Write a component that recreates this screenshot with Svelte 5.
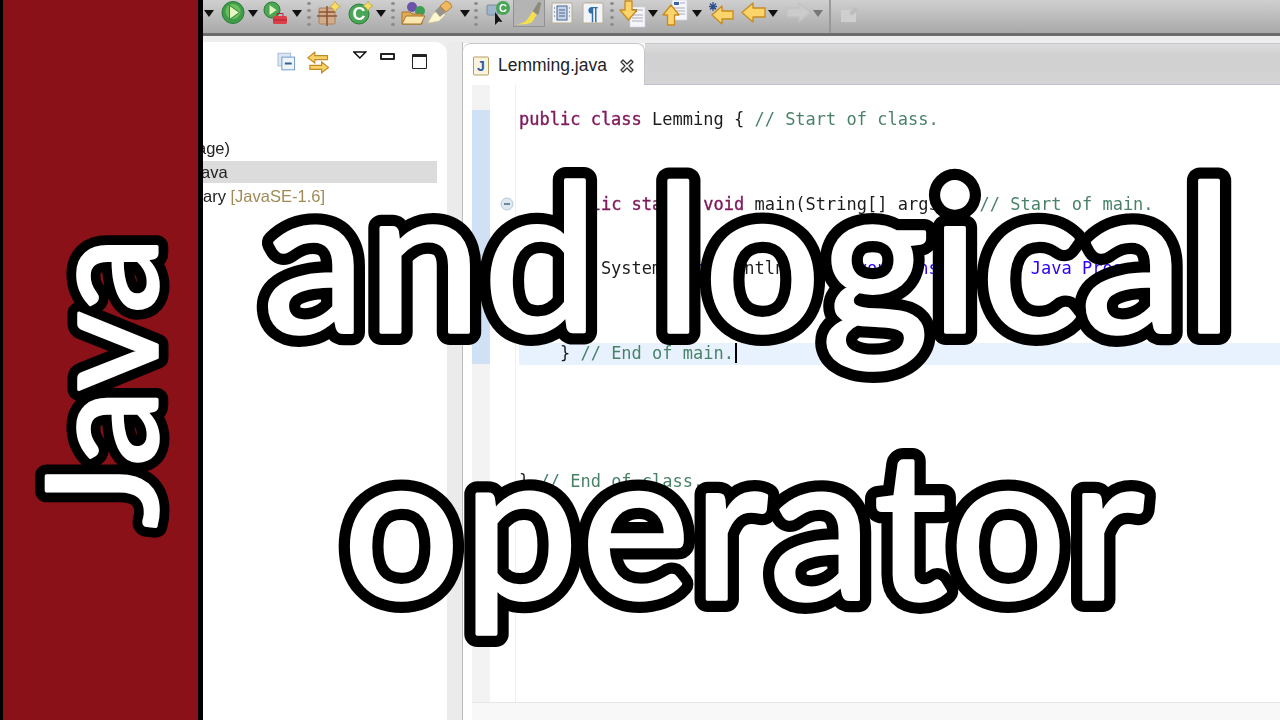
<script>
  // kind, centre x on the page (the toolbar starts at x=203)
  const tools = [
    ['caret', 209], ['run', 233], ['caret', 253], ['ext', 275], ['caret', 297], ['dots', 309],
    ['pkg', 328], ['cls', 360], ['caret', 381], ['dots', 393], ['folder', 413], ['pencil', 440],
    ['caret', 465], ['dots', 476], ['hier', 498], ['mark', 529], ['block', 562], ['para', 593],
    ['dots', 612], ['down', 632], ['caret', 653], ['up', 675], ['caret', 697], ['star', 722],
    ['back', 754], ['caret', 773], ['fwd', 798], ['caretoff', 818], ['line', 830], ['pin', 849]
  ];
  const widths = { caret: 10, caretoff: 10, dots: 4, line: 2, mark: 32 };

  let right = 203;
  const items = tools.map(([kind, x]) => {
    const w = widths[kind] ?? 26;
    const gap = x - w / 2 - right;
    right = x + w / 2;
    return { kind, w, gap };
  });
</script>

{#snippet arrow(d, fill = '#fbd56b', edge = '#c98a1e')}
  <path {d} fill={fill} stroke={edge} stroke-width="1.3" stroke-linejoin="round" />
{/snippet}

{#snippet page(x, y)}
  <rect {x} {y} width="15" height="20" fill="#f4f6fa" stroke="#ccd" stroke-width=".6" />
  <rect x={x + 2} y={y + 2} width="5" height="3" fill="#3a62a8" />
  <path d="M{x + 8} {y + 3}h5M{x + 2} {y + 8}h11M{x + 2} {y + 11}h11M{x + 2} {y + 14}h11" stroke="#aab" />
{/snippet}

<div class="page">
  <div class="spine"></div>
  <div class="ide">
    <div class="toolbar">
      {#each items as t}
        <div class="tool {t.kind}" style="width:{t.w}px;margin-left:{t.gap}px">
          {#if t.kind === 'run'}
            <svg viewBox="0 0 26 26">
              <circle cx="13" cy="12.5" r="11" fill="#3f9d48" stroke="#2a7c38" />
              <circle cx="13" cy="11.5" r="7.5" fill="#69bd5d" />
              <path d="M9.5 5.5l10 7-10 7z" fill="#e4f5bf" stroke="#2f8a3a" />
            </svg>
          {:else if t.kind === 'ext'}
            <svg viewBox="0 0 26 26">
              <circle cx="10" cy="10" r="8" fill="#4ca653" stroke="#2a7c38" />
              <path d="M7.5 5l7 5-7 5z" fill="#dff2ba" />
              <rect x="11" y="16" width="14" height="8" rx="1.5" fill="#dc3f49" />
              <path d="M15 16v-2.500h6v2.500M11 20h14" stroke="#a92530" fill="none" />
            </svg>
          {:else if t.kind === 'pkg'}
            <svg viewBox="0 0 26 26">
              <rect x="4" y="8" width="16" height="16" rx="1" fill="#d2ab8a" stroke="#a9805f" />
              <path d="M12 6v20M2 16h20M4 12h16" stroke="#8a5636" stroke-width="1.500" />
              <path d="M20 1l2 3.500 3.500 2-3.500 2-2 3.500-2-3.500-3.500-2 3.500-2z" fill="#f6dd6a" stroke="#b99a2c" stroke-width=".6" />
            </svg>
          {:else if t.kind === 'cls'}
            <svg viewBox="0 0 26 26">
              <circle cx="12" cy="14" r="10" fill="#4aa556" stroke="#2a7c38" />
              <text x="12" y="20" class="badge">C</text>
              <path d="M21 1l1.800 3.200 3.200 1.800-3.200 1.800-1.800 3.200-1.800-3.200-3.200-1.800 3.200-1.800z" fill="#f6dd6a" stroke="#b99a2c" stroke-width=".6" />
            </svg>
          {:else if t.kind === 'folder'}
            <svg viewBox="0 0 26 26">
              <circle cx="12" cy="7" r="5" fill="#6a52a8" />
              <circle cx="20" cy="11" r="5" fill="#3f9d55" />
              <path d="M2 12h8l2 2h10v10H2z" fill="#e0ac55" stroke="#a8742a" />
              <path d="M2 24l4-8h19l-4 8z" fill="#fbe6b0" stroke="#a8742a" />
            </svg>
          {:else if t.kind === 'pencil'}
            <svg viewBox="0 0 26 26">
              <path d="M1 23l5-9 7-5 5 6-6 6z" fill="#fdf6cf" stroke="#d8c98c" stroke-width=".6" />
              <path d="M8 11l5-5 6 6-6 5z" fill="#9a958c" />
              <path d="M13 6l6-5q5 1 6 6l-6 5z" fill="#f0b860" stroke="#b98230" />
            </svg>
          {:else if t.kind === 'hier'}
            <svg viewBox="0 0 26 26">
              <rect x="2" y="5" width="11" height="10" rx="1" fill="#9db4c9" stroke="#7c8fa0" />
              <circle cx="18" cy="8" r="7" fill="#49a556" />
              <text x="18" y="12" class="badge small">C</text>
              <path d="M10 12v13l3.500-3.500 4 .5z" fill="#151515" />
            </svg>
          {:else if t.kind === 'mark'}
            <svg viewBox="0 0 32 28">
              <path d="M3 26q7-1 11-5l6-9 4 4-5 8q-6 3-16 2z" fill="#f4e04a" />
              <path d="M20 12l6-10 3 1-3 13z" fill="#8c8a7a" />
            </svg>
          {:else if t.kind === 'block'}
            <svg viewBox="0 0 26 26">
              <rect x="3" y="3" width="20" height="20" rx="1" fill="#eef2f7" stroke="#b9ad90" />
              <rect x="8" y="6" width="10" height="14" fill="#c7d3e5" stroke="#47658f" />
              <path d="M10 10h6M10 13h6M10 16h6M5 8h1M5 12h1M5 16h1M20 8h1M20 12h1M20 16h1" stroke="#47658f" />
            </svg>
          {:else if t.kind === 'para'}
            <svg viewBox="0 0 26 26">
              <rect x="3" y="3" width="20" height="20" rx="1" fill="#f1f4f8" stroke="#b9ad90" />
              <text x="13" y="20" class="pilcrow">¶</text>
            </svg>
          {:else if t.kind === 'down'}
            <svg viewBox="0 0 26 26">
              {@render page(11, 7)}
              {@render arrow('M6 1h7v9h5l-8.500 10L1 10h5z')}
            </svg>
          {:else if t.kind === 'up'}
            <svg viewBox="0 0 26 26">
              {@render page(10, 0)}
              {@render arrow('M9 5l8 10h-4.500v10h-7V15H1z')}
            </svg>
          {:else if t.kind === 'star'}
            <svg viewBox="0 0 26 26">
              {@render arrow('M13 6v5h11v8H13v5L3 15z')}
              <path d="M4 2v9M0 6.500h8M1 3.500l6 6M7 3.500l-6 6" stroke="#2d4d8c" stroke-width="1.300" />
            </svg>
          {:else if t.kind === 'back'}
            <svg viewBox="0 0 26 26">
              {@render arrow('M12 3v5h12v9H12v5L1 12.500z')}
            </svg>
          {:else if t.kind === 'fwd'}
            <svg viewBox="0 0 26 26">
              {@render arrow('M14 3v5H2v9h12v5l11-9.500z', '#cbcbcb', '#c2c2c2')}
            </svg>
          {:else if t.kind === 'pin'}
            <svg viewBox="0 0 26 26">
              <rect x="5" y="10" width="15" height="12" fill="#cfcfcf" />
              <path d="M13 13l6-6 3 3-6 6z" fill="#bdbdbd" />
            </svg>
          {/if}
        </div>
      {/each}
    </div>

    <div class="main">
      <section class="panel">
        <div class="viewbar">
          <svg class="collapse" width="20" height="20" viewBox="0 0 20 20">
            <rect x="1" y="1" width="13" height="13" fill="#dbe6f2" stroke="#a9bdd3" />
            <rect x="5" y="5" width="13" height="13" fill="#eef4fa" stroke="#6f9bc8" />
            <path d="M8 11.500h7" stroke="#3b5f8c" stroke-width="2" />
          </svg>
          <svg class="link" width="26" height="24" viewBox="0 0 26 24">
            <path d="M9 1L2 6.500 9 12V8.500h13v-4H9z" fill="#f6d26a" stroke="#c48a22" stroke-width="1.200" />
            <path d="M16 11l7 5.500-7 5.500v-3.500H4v-4h12z" fill="#f6d26a" stroke="#c48a22" stroke-width="1.200" />
          </svg>
          <svg class="menu" width="14" height="8" viewBox="0 0 14 8">
            <path d="M1 1h12L7 7z" fill="#fff" stroke="#111" stroke-width="1.500" />
          </svg>
          <div class="min"></div>
          <div class="max"></div>
        </div>
        <div class="tree">
          <div class="row cut">age)</div>
          <div class="row selected">ava</div>
          <div class="row">ary <span class="decor">[JavaSE-1.6]</span></div>
        </div>
      </section>

      <div class="sash"></div>

      <section class="editor">
        <div class="tabs">
          <div class="tab">
            <svg class="jfile" width="18" height="20" viewBox="0 0 18 20">
              <rect x="1.500" y="1" width="15" height="18" rx="1" fill="#f9f3df" stroke="#b79d60" />
              <text x="9" y="15" class="jletter">J</text>
            </svg>
            <span>Lemming.java</span>
            <svg class="close" width="16" height="16" viewBox="0 0 16 16">
              <path d="M2 4l2-2 4 4 4-4 2 2-4 4 4 4-2 2-4-4-4 4-2-2 4-4z" fill="#fff" stroke="#333" stroke-width="1.300" stroke-linejoin="round" />
            </svg>
          </div>
          <div class="strip"></div>
        </div>
        <div class="body">
          <div class="ruler"><div class="marker"></div></div>
          <div class="gutter">
            <svg class="fold" width="14" height="14" viewBox="0 0 14 14">
              <circle cx="7" cy="7" r="6" fill="#dfe8f0" stroke="#b6c8d8" />
              <path d="M4 7h6" stroke="#44688c" stroke-width="1.500" />
            </svg>
          </div>
          <pre class="code"><span class="kw">public class</span> Lemming &#123; <span class="cm">// Start of class.</span>



    <span class="kw">public static void</span> main(String[] args) &#123; <span class="cm">// Start of main.</span>


        System.<span class="fld">out</span>.println(<span class="str">"Hey, you fans of this Java Programs"</span>);



<span class="current">    &#125; <span class="cm">// End of main.</span><span class="caretmark"></span></span>




&#125; <span class="cm">// End of class.</span></pre>
        </div>
        <div class="hscroll"></div>
      </section>
    </div>
  </div>

  <!-- black outline layer re-uses the text below, white face thickened with its own stroke -->
  <svg class="titles" width="1280" height="720" viewBox="0 0 1280 720">
    <g class="outline">
      <use href="#line1" />
      <use href="#line2" />
      <use href="#spine" class="thin" />
    </g>
    <g class="face">
      <text id="line1" x="263" y="332" font-size="206" letter-spacing="1.400">and logical</text>
      <text id="line2" x="343" y="599" font-size="206" letter-spacing="3">operator</text>
      <text id="spine" transform="translate(157 528) rotate(-90)" font-size="154">Java</text>
    </g>
  </svg>
</div>

<style>
  :global(body) {
    margin: 0;
    background: #fff;
  }

  .page {
    position: relative;
    display: flex;
    width: 1280px;
    height: 720px;
    overflow: hidden;
    font-family: "Liberation Sans", Arial, sans-serif;
  }

  .spine {
    flex: none;
    box-sizing: border-box;
    width: 203px;
    background: #8b1118;
    border-left: 3px solid #000;
    border-right: 5px solid #000;
  }

  .ide {
    flex: 1;
    display: flex;
    flex-direction: column;
    min-width: 0;
  }

  .toolbar {
    flex: none;
    box-sizing: content-box;
    display: flex;
    align-items: center;
    height: 26px;
    padding-bottom: 7px;
    background: linear-gradient(#cfcfcf, #a9a9a9);
    border-bottom: 3px solid #6c6c6c;
    filter: blur(0.4px);
  }

  .tool {
    flex: none;
    height: 26px;
    display: flex;
    align-items: center;
    justify-content: center;
    position: relative;
  }

  .tool svg {
    display: block;
    width: 100%;
    overflow: visible;
  }

  .caret::after,
  .caretoff::after {
    content: "";
    border: 5px solid transparent;
    border-top: 7px solid #111;
    border-bottom: 0;
  }

  .caretoff::after {
    border-top-color: #777;
  }

  .dots {
    background: radial-gradient(circle, #8e8e8e 1.500px, transparent 2px) 0 0 / 4px 7px;
  }

  .line {
    height: 33px;
    margin-bottom: -7px;
    background: #999;
    width: 1px;
  }

  .mark {
    height: 28px;
    background: #b4b4b4;
    border: 1px solid #919191;
    box-sizing: border-box;
  }

  .badge {
    font: bold 18px "Liberation Sans", sans-serif;
    fill: #fff;
    text-anchor: middle;
  }

  .small {
    font-size: 11px;
  }

  .pilcrow {
    font: bold 19px "Liberation Sans", sans-serif;
    fill: #2f6ea8;
    text-anchor: middle;
  }

  .main {
    flex: 1;
    display: flex;
    min-height: 0;
    padding-top: 6px;
    background: #eeeeee;
  }

  .panel {
    flex: none;
    width: 244px;
    overflow: hidden;
    background: #fff;
    border-top-right-radius: 12px;
  }

  .viewbar {
    display: flex;
    height: 94px;
    box-sizing: border-box;
    padding: 9px 20px 0 74px;
  }

  .collapse {
    margin-top: 1px;
  }

  .link {
    margin: 0 0 0 9px;
  }

  .menu {
    margin: 0 0 0 22px;
  }

  .min {
    box-sizing: border-box;
    width: 16px;
    height: 7px;
    margin: 2px 0 0 13px;
    border: 2px solid #222;
    border-radius: 1px;
  }

  .max {
    box-sizing: border-box;
    width: 15px;
    height: 15px;
    margin: 3px 0 0 17px;
    border: 1.500px solid #222;
    border-top-width: 3px;
    border-radius: 1px;
  }

  .tree {
    margin-right: 10px;
    font-size: 16.500px;
    color: #222;
    filter: blur(0.3px);
  }

  .row {
    height: 24px;
    line-height: 24px;
  }

  .cut {
    text-indent: -6px;
  }

  .selected {
    height: 22px;
    margin: 1px 0;
    line-height: 22px;
    background: #dcdcdc;
    text-indent: -2px;
  }

  .decor {
    color: #a08a56;
  }

  .sash {
    flex: none;
    width: 15px;
    background: #ebebeb;
    border-right: 1px solid #bcbcbc;
  }

  .editor {
    flex: 1;
    display: flex;
    flex-direction: column;
    min-width: 0;
    margin-top: 1px;
    background: #fff;
  }

  .tabs {
    flex: none;
    display: flex;
    height: 42px;
  }

  .tab {
    flex: none;
    box-sizing: border-box;
    width: 182px;
    display: flex;
    align-items: center;
    padding: 2px 0 0 9px;
    font-size: 17.500px;
    color: #1e1e28;
    background: #fff;
    border-top: 1px solid #c6c6ce;
    border-right: 1px solid #c6c6ce;
    border-top-left-radius: 8px;
    border-top-right-radius: 8px;
  }

  .jfile {
    margin-right: 8px;
  }

  .jletter {
    font: bold 14px "Liberation Sans", sans-serif;
    fill: #2f5ea8;
    text-anchor: middle;
  }

  .close {
    margin-left: 12px;
  }

  .strip {
    flex: 1;
    background: linear-gradient(#dcdcdc, #d0d0d0 30%, #d4d4d4);
    border-top: 1px solid #c6c6ce;
    border-bottom: 1px solid #bfc2cc;
  }

  .body {
    flex: 1;
    display: flex;
    min-height: 0;
    padding-left: 9px;
  }

  .ruler {
    flex: none;
    width: 18px;
    background: #f3f3f3;
  }

  .marker {
    height: 254px;
    margin-top: 25px;
    background: #d0e1f6;
  }

  .gutter {
    flex: none;
    box-sizing: border-box;
    width: 26px;
    border-right: 1px solid #efefef;
  }

  .fold {
    display: block;
    margin: 112px 0 0 10px;
  }

  .code {
    flex: 1;
    margin: 0;
    padding: 24px 0 0 3px;
    font: 17px/21.300px "DejaVu Sans Mono", monospace;
    color: #1c1c1c;
    overflow: hidden;
    filter: blur(0.3px);
  }

  .kw {
    color: #7f1a5c;
    -webkit-text-stroke: 0.4px #7f1a5c;
  }

  .cm {
    color: #4a8268;
  }

  .str {
    color: #2a00ff;
  }

  .fld {
    color: #0000c0;
  }

  .current {
    display: block;
    background: #e8f2fe;
  }

  .caretmark {
    display: inline-block;
    width: 2px;
    height: 20px;
    margin-left: 1px;
    vertical-align: -4px;
    background: #000;
  }

  .hscroll {
    flex: none;
    height: 17px;
    margin-left: 9px;
    background: #f8f8f8;
    border-top: 1px solid #e6e6e6;
  }

  .titles {
    position: absolute;
    inset: 0;
    pointer-events: none;
    font-family: Lato, "DejaVu Sans", sans-serif;
    stroke-linejoin: round;
  }

  .outline {
    fill: #000;
    stroke: #000;
    stroke-width: 26px;
  }

  .outline .thin {
    stroke-width: 23px;
  }

  .face {
    fill: #fff;
    stroke: #fff;
    stroke-width: 3.500px;
  }
</style>
